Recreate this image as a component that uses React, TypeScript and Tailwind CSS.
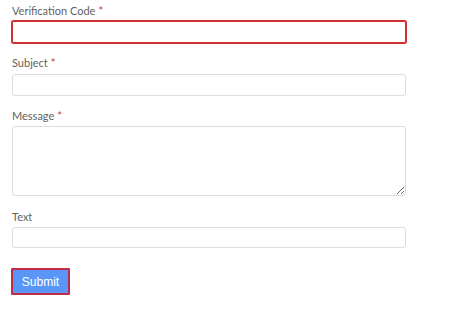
function Label({ text, required }: { text: string; required?: boolean }) {
  return (
    <label className="block h-[14px] text-[11px] leading-[14px] text-[#5f5f5f]">
      {text}
      {required && <span className="ml-[3px] text-[#c0392b]">*</span>}
    </label>
  );
}

export default function App() {
  return (
    <div className="min-h-[316px] w-[474px] bg-white pl-[12px] pt-[4px] font-['Lato',sans-serif]">
      <form className="w-[394px]" onSubmit={(e) => e.preventDefault()}>
        <div>
          <Label text="Verification Code" required />
          <input
            type="text"
            className="mt-[3px] block h-[22px] w-full rounded-[1px] border border-[#d32f2f] bg-white outline outline-1 outline-[#d32f2f]"
          />
        </div>

        <div className="mt-[13px]">
          <Label text="Subject" required />
          <input
            type="text"
            className="mt-[4px] block h-[22px] w-full rounded-[3px] border border-[#dcdcdc] bg-white"
          />
        </div>

        <div className="mt-[13px]">
          <Label text="Message" required />
          <textarea className="mt-[3px] block h-[70px] w-full resize-y rounded-[3px] border border-[#dcdcdc] bg-white" />
        </div>

        <div className="mt-[14px]">
          <Label text="Text" />
          <input
            type="text"
            className="mt-[3px] block h-[21px] w-full rounded-[3px] border border-[#dcdcdc] bg-white"
          />
        </div>

        <button
          type="submit"
          className="ml-[-1px] mt-[20px] h-[27px] w-[59px] rounded-[1px] border-2 border-[#c22a4a] bg-[#5a96f7] font-['Liberation_Sans',Arial,sans-serif] text-[12px] text-white"
        >
          Submit
        </button>
      </form>
    </div>
  );
}
